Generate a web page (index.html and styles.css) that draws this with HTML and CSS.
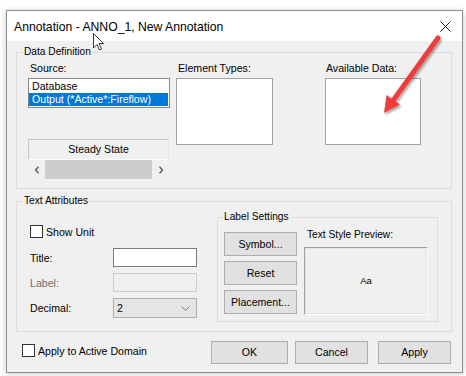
FILE: index.html
```html
<!DOCTYPE html>
<html>
<head>
<meta charset="utf-8">
<link rel="stylesheet" href="styles.css">
</head>
<body>
<div class="window">
  <div class="titlebar">
    <span class="title">Annotation - ANNO_1, New Annotation</span>
    <svg class="close" width="11" height="11" viewBox="0 0 11 11"><path d="M0.5 0.5 L10.5 10.5 M10.5 0.5 L0.5 10.5" stroke="#222" stroke-width="1" fill="none"/></svg>
  </div>
  <div class="client">
    <fieldset class="group dd">
      <legend>Data Definition</legend>
      <div class="dd-grid">
        <div class="col src">
          <div class="lbl">Source:</div>
          <div class="listbox">
            <div class="item">Database</div>
            <div class="item sel">Output (*Active*:Fireflow)</div>
          </div>
          <div class="state">Steady State</div>
          <div class="hscroll">
            <span class="arr"><svg width="6" height="8" viewBox="0 0 6 8"><path d="M4.5 0.8 L1.5 4 L4.5 7.2" stroke="#555" stroke-width="1.3" fill="none"/></svg></span>
            <span class="thumb"></span>
            <span class="arr"><svg width="6" height="8" viewBox="0 0 6 8"><path d="M1.5 0.8 L4.5 4 L1.5 7.2" stroke="#555" stroke-width="1.3" fill="none"/></svg></span>
          </div>
        </div>
        <div class="col et">
          <div class="lbl">Element Types:</div>
          <div class="box"></div>
        </div>
        <div class="col ad">
          <div class="lbl">Available Data:</div>
          <div class="box"></div>
        </div>
      </div>
    </fieldset>

    <fieldset class="group ta">
      <legend>Text Attributes</legend>
      <div class="ta-row">
        <div class="ta-left">
          <div class="check"><span class="cb"></span><span>Show Unit</span></div>
          <div class="field f-title"><span class="flbl">Title:</span><span class="input"></span></div>
          <div class="field f-label"><span class="flbl disabled">Label:</span><span class="input dis"></span></div>
          <div class="field f-dec"><span class="flbl">Decimal:</span>
            <span class="select"><span>2</span><svg width="9" height="5" viewBox="0 0 9 5"><path d="M0.5 0.5 L4.5 4.3 L8.5 0.5" stroke="#777" stroke-width="1" fill="none"/></svg></span>
          </div>
        </div>
        <fieldset class="group ls">
          <legend>Label Settings</legend>
          <div class="ls-row">
            <div class="btncol">
              <div class="btn">Symbol...</div>
              <div class="btn">Reset</div>
              <div class="btn">Placement...</div>
            </div>
            <div class="preview">
              <div class="plbl">Text Style Preview:</div>
              <div class="pbox">Aa</div>
            </div>
          </div>
        </fieldset>
      </div>
    </fieldset>

    <div class="footer">
      <div class="check foot-check"><span class="cb"></span><span>Apply to Active Domain</span></div>
      <div class="btn b-ok">OK</div>
      <div class="btn b-cancel">Cancel</div>
      <div class="btn b-apply">Apply</div>
    </div>
  </div>
</div>

<svg class="overlay" width="466" height="376" viewBox="0 0 466 376">
  <defs>
    <filter id="sh" x="-30%" y="-30%" width="160%" height="160%">
      <feDropShadow dx="1.5" dy="2" stdDeviation="1.3" flood-color="#000" flood-opacity="0.35"/>
    </filter>
  </defs>
  <g filter="url(#sh)">
    <line x1="438" y1="38" x2="392" y2="102" stroke="#ef3e3e" stroke-width="5" stroke-linecap="round"/>
    <polygon points="384,113 386.5,95 400,104.6" fill="#ef3e3e"/>
  </g>
  <path d="M93.5 33.5 L93.5 48 L97 44.5 L99.5 50 L101.5 49 L99 43.5 L103.5 43.5 Z" fill="#fff" stroke="#222" stroke-width="0.9" stroke-linejoin="round"/>
</svg>
</body>
</html>
```

FILE: styles.css
```css
html, body {
  margin: 0;
  padding: 0;
  background: #fff;
}
body {
  font-family: "Liberation Sans", Arial, sans-serif;
  font-size: 10.6px;
  color: #000;
  width: 466px;
  height: 376px;
  overflow: hidden;
  position: relative;
}
.window {
  position: relative;
  top: 10px;
  left: 6px;
  width: 455px;
  height: 361px;
  border: 1px solid #8e8e8e;
  box-shadow: 0 1px 6px rgba(0, 0, 0, 0.22);
  background: #f0f0f0;
  display: flex;
  flex-direction: column;
}
.titlebar {
  height: 30px;
  background: #fff;
  display: flex;
  align-items: center;
  justify-content: space-between;
  padding: 0 11px 0 7px;
}
.title {
  font-size: 12.2px;
  color: #000;
  padding-top: 1px;
}
.close {
  display: block;
  margin-top: 1px;
}
.client {
  flex: 1;
  padding: 5px 10px 0 9px;
}
.group {
  margin: 0;
  border: 1px solid #dcdcdc;
  min-inline-size: 0;
}
.group > legend {
  padding: 0 1px;
  margin-left: 6px;
  font-size: 10.2px;
  line-height: 12px;
}
.group.dd {
  padding: 0 0 9px 11px;
}
.group.dd > legend {
  margin-left: -5px;
}
.dd-grid {
  display: flex;
  align-items: flex-start;
}
.lbl {
  line-height: 12px;
  margin-top: 4px;
  padding-left: 2px;
  white-space: nowrap;
}
.src { width: 142px; }
.et { width: 97px; margin-left: 6px; }
.ad { width: 96px; margin-left: 52px; }
.ad .lbl { padding-left: 1px; }
.listbox {
  margin-top: 4px;
  height: 30px;
  box-sizing: border-box;
  border: 1px solid #828790;
  background: #fff;
  padding-top: 1px;
}
.item {
  height: 13px;
  line-height: 13px;
  padding-left: 3px;
  white-space: nowrap;
  overflow: hidden;
}
.item.sel {
  background: #0078d7;
  color: #fff;
  margin-right: 1px;
}
.state {
  margin-top: 31px;
  width: 141px;
  height: 21px;
  box-sizing: border-box;
  border: 1px solid;
  border-color: #c6c6c6 #e6e6e6 #fdfdfd #c6c6c6;
  text-align: center;
  line-height: 19px;
}
.hscroll {
  width: 141px;
  height: 19px;
  display: flex;
  background: #f0f0f0;
}
.hscroll .arr {
  width: 17px;
  display: flex;
  align-items: center;
  justify-content: center;
}
.hscroll .thumb {
  flex: 1;
  background: #cdcdcd;
}
.box {
  margin-top: 4px;
  height: 67px;
  box-sizing: border-box;
  border: 1px solid #a0a0a6;
  background: #fff;
}
.group.ta {
  margin-top: 6px;
  padding: 0 0 9px 0;
}
.ta-row {
  display: flex;
  align-items: flex-start;
}
.ta-left {
  width: 184px;
  padding-left: 13px;
}
.check {
  display: flex;
  align-items: center;
  height: 13px;
  white-space: nowrap;
}
.ta-left .check { margin-top: 18px; }
.cb {
  width: 13px;
  height: 13px;
  box-sizing: border-box;
  border: 1px solid #333;
  background: #fff;
  margin-right: 3px;
  flex: none;
}
.field {
  display: flex;
  align-items: center;
  height: 19px;
}
.f-title { margin-top: 10px; }
.f-label { margin-top: 6px; }
.f-dec { margin-top: 6px; height: 20px; }
.flbl {
  width: 83px;
  flex: none;
}
.flbl.disabled { color: #6d6d6d; }
.input {
  width: 84px;
  height: 19px;
  box-sizing: border-box;
  border: 1px solid #7a7a7a;
  background: #fff;
}
.input.dis {
  border-color: #cccccc;
  background: #f0f0f0;
}
.select {
  width: 84px;
  height: 20px;
  box-sizing: border-box;
  border: 1px solid #adadad;
  background: #e5e5e5;
  display: flex;
  align-items: center;
  justify-content: space-between;
  padding: 0 6px 0 3px;
}
.select svg { display: block; }
.group.ls {
  margin-top: 4px;
  margin-left: 3px;
  width: 221px;
  box-sizing: border-box;
  padding: 0 9px 6px 6px;
}
.group.ls > legend { margin-left: -1px; }
.ls-row {
  display: flex;
  align-items: flex-start;
}
.btncol {
  margin-top: 9px;
  display: flex;
  flex-direction: column;
  gap: 5px;
}
.btn {
  box-sizing: border-box;
  border: 1px solid #adadad;
  background: #e1e1e1;
  text-align: center;
  white-space: nowrap;
}
.btncol .btn {
  width: 73px;
  height: 24px;
  line-height: 22px;
}
.preview {
  margin-left: 7px;
}
.plbl {
  margin-top: 6px;
  line-height: 12px;
  padding-left: 3px;
  font-size: 10.2px;
  white-space: nowrap;
}
.pbox {
  margin-top: 6px;
  width: 124px;
  height: 68px;
  box-sizing: border-box;
  border: 1px solid;
  border-color: #a0a0a0 #ffffff #ffffff #a0a0a0;
  box-shadow: inset 1px 1px 0 #e3e3e3, inset -1px -1px 0 #e3e3e3;
  display: flex;
  align-items: center;
  justify-content: center;
  font-size: 9.5px;
  padding-bottom: 1px;
}
.footer {
  margin-top: 9px;
  display: flex;
  align-items: flex-start;
  padding-left: 6px;
}
.foot-check {
  margin-top: 3px;
  width: 189px;
}
.footer .btn {
  height: 23px;
  line-height: 21px;
}
.b-ok { width: 77px; }
.b-cancel { width: 73px; margin-left: 7px; }
.b-apply { width: 73px; margin-left: 10px; }
.overlay {
  position: absolute;
  top: 0;
  left: 0;
  pointer-events: none;
}
```
